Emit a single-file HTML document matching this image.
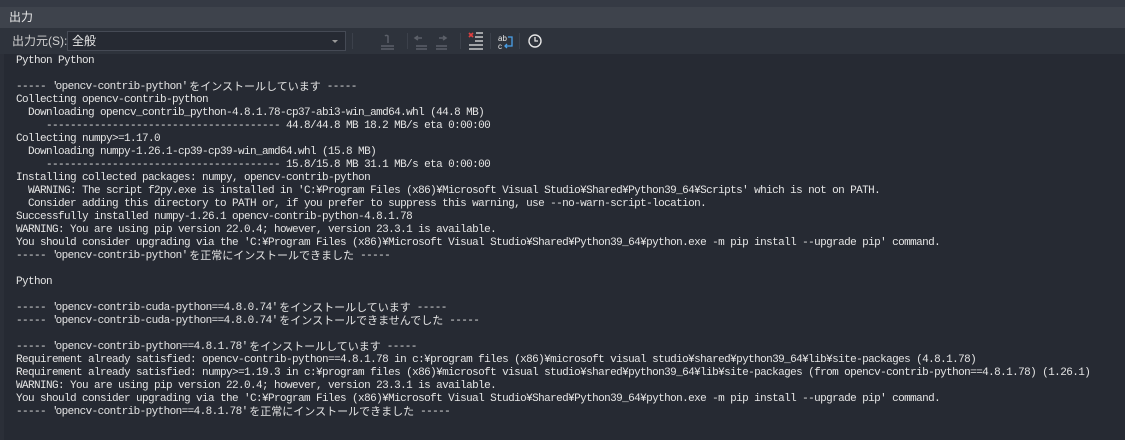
<!DOCTYPE html>
<html><head><meta charset="utf-8"><style>
*{margin:0;padding:0;box-sizing:border-box}
body{width:1125px;height:440px;background:#262a33;overflow:hidden;font-family:"Liberation Sans","Noto Sans CJK JP",sans-serif;color:#dcdcdc;position:relative}
.top{position:absolute;left:0;top:0;width:1125px;height:7px;background:#353a44}
.title{position:absolute;left:0;top:7px;width:1125px;height:21px;background:#3e434c;font-size:12px;line-height:21px;padding-left:9px;color:#e8e8e8}
.tb{position:absolute;left:0;top:28px;width:1125px;height:26px;background:#2e333c}
.lbl{position:absolute;left:12px;top:4px;font-size:12px;color:#d0d0d0}
.dd{position:absolute;left:67px;top:3px;width:279px;height:20px;border:1px solid #454a55;background:#262a33;font-size:12px;line-height:18px;padding-left:4px;color:#e8e8e8}
.dd:after{content:"";position:absolute;right:7px;top:8px;border-left:3px solid transparent;border-right:3px solid transparent;border-top:3px solid #999}
.sep{position:absolute;top:5px;width:1px;height:16px;background:#3c414b}
.ic{position:absolute;top:0}
.left{position:absolute;left:0;top:54px;width:4px;height:386px;background:#2b2f38}
.out{position:absolute;left:16px;top:55px;font-family:"Liberation Mono","Noto Sans CJK JP",monospace;font-size:11px;letter-spacing:-0.6px;color:#e4e4e4;white-space:normal}
.out div{height:13px;line-height:13px;overflow:visible;white-space:pre}
.q{letter-spacing:-3px}
.j{font-size:11px;letter-spacing:0;font-family:"Noto Sans CJK JP",sans-serif;line-height:13px;display:inline-block;height:13px;vertical-align:top;position:relative;top:-1px;margin-left:-2px}
</style></head><body>
<div class="top"></div>
<div class="title">出力</div>
<div class="tb">
<div class="lbl">出力元(S):</div>
<div class="dd">全般</div>
<div class="sep" style="left:352px"></div>
<svg class="ic" width="1125" height="26" style="left:0">
<g stroke="#5c6069" stroke-width="1.5" fill="none">
<path d="M381 21h13M381 18h13M388 15V8a2 2 0 0 0-3 0"/>
<path d="M416 21h11M416 18h11M415 10h7M418 8l-3 2 3 2"/>
<path d="M436 21h11M436 18h11M439 10h7M443 8l3 2-3 2"/>
</g>
<g stroke="#e6e6e6" stroke-width="1.3" fill="none">
<path d="M469 21h14M469 17h14M475 13h8M475 9h8M476 5h7"/>
</g>
<path d="M469 5l4 4M473 5l-4 4" stroke="#e04040" stroke-width="1.6"/>
<text x="498" y="13" font-size="8" fill="#e6e6e6" font-family="Liberation Sans">ab</text>
<text x="498" y="21" font-size="8" fill="#e6e6e6" font-family="Liberation Sans">c</text>
<path d="M508 9h4v9h-7M507 16l-2 2 2 2" stroke="#4aa0e8" stroke-width="1.3" fill="none"/>
<circle cx="535" cy="13" r="6" stroke="#e6e6e6" stroke-width="1.4" fill="none"/>
<path d="M535 9v4h3" stroke="#e6e6e6" stroke-width="1.3" fill="none"/>
</svg>
<div class="sep" style="left:407px"></div>
<div class="sep" style="left:460px"></div>
<div class="sep" style="left:490px"></div>
<div class="sep" style="left:519px"></div>
</div>
<div class="left"></div>
<div class="out"><div>Python Python</div><div></div><div>----- <span class="q">'</span>opencv-contrib-python<span class="q">'</span> <span class="j">をインストールしています</span> -----</div><div>Collecting opencv-contrib-python</div><div>  Downloading opencv_contrib_python-4.8.1.78-cp37-abi3-win_amd64.whl (44.8 MB)</div><div>     --------------------------------------- 44.8/44.8 MB 18.2 MB/s eta 0:00:00</div><div>Collecting numpy>=1.17.0</div><div>  Downloading numpy-1.26.1-cp39-cp39-win_amd64.whl (15.8 MB)</div><div>     --------------------------------------- 15.8/15.8 MB 31.1 MB/s eta 0:00:00</div><div>Installing collected packages: numpy, opencv-contrib-python</div><div>  WARNING: The script f2py.exe is installed in 'C:¥Program Files (x86)¥Microsoft Visual Studio¥Shared¥Python39_64¥Scripts' which is not on PATH.</div><div>  Consider adding this directory to PATH or, if you prefer to suppress this warning, use --no-warn-script-location.</div><div>Successfully installed numpy-1.26.1 opencv-contrib-python-4.8.1.78</div><div>WARNING: You are using pip version 22.0.4; however, version 23.3.1 is available.</div><div>You should consider upgrading via the 'C:¥Program Files (x86)¥Microsoft Visual Studio¥Shared¥Python39_64¥python.exe -m pip install --upgrade pip' command.</div><div>----- <span class="q">'</span>opencv-contrib-python<span class="q">'</span> <span class="j">を正常にインストールできました</span> -----</div><div></div><div>Python</div><div></div><div>----- <span class="q">'</span>opencv-contrib-cuda-python==4.8.0.74<span class="q">'</span> <span class="j">をインストールしています</span> -----</div><div>----- <span class="q">'</span>opencv-contrib-cuda-python==4.8.0.74<span class="q">'</span> <span class="j">をインストールできませんでした</span> -----</div><div></div><div>----- <span class="q">'</span>opencv-contrib-python==4.8.1.78<span class="q">'</span> <span class="j">をインストールしています</span> -----</div><div>Requirement already satisfied: opencv-contrib-python==4.8.1.78 in c:¥program files (x86)¥microsoft visual studio¥shared¥python39_64¥lib¥site-packages (4.8.1.78)</div><div>Requirement already satisfied: numpy>=1.19.3 in c:¥program files (x86)¥microsoft visual studio¥shared¥python39_64¥lib¥site-packages (from opencv-contrib-python==4.8.1.78) (1.26.1)</div><div>WARNING: You are using pip version 22.0.4; however, version 23.3.1 is available.</div><div>You should consider upgrading via the 'C:¥Program Files (x86)¥Microsoft Visual Studio¥Shared¥Python39_64¥python.exe -m pip install --upgrade pip' command.</div><div>----- <span class="q">'</span>opencv-contrib-python==4.8.1.78<span class="q">'</span> <span class="j">を正常にインストールできました</span> -----</div></div>
</body></html>
